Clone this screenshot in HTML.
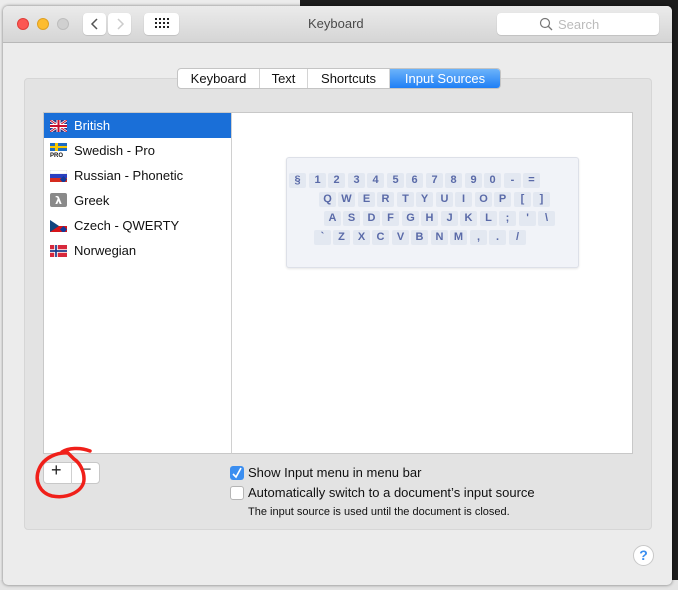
<!DOCTYPE html>
<html><head><style>
*{margin:0;padding:0;box-sizing:border-box}
body{width:678px;height:590px;overflow:hidden;background:#ececec;font-family:"Liberation Sans",sans-serif;position:relative}
.abs{position:absolute}
.win{left:3px;top:6px;width:669px;height:579px;background:#ececec;border-radius:5px;overflow:hidden;box-shadow:0 0 3px rgba(0,0,0,.5)}
.tb{left:0;top:0;width:669px;height:37px;background:linear-gradient(#ebebeb,#d5d5d5);border-bottom:1px solid #b8b8b8}
.dot{width:12px;height:12px;border-radius:50%;top:12px}
.btn{background:#fff;border-radius:4px;box-shadow:0 0.5px 1px rgba(0,0,0,.2)}
.tabs{left:174px;top:62px;height:21px;display:flex;border:1px solid #c4c4c4;border-radius:4px;background:#fff;font-size:13px;overflow:hidden}
.tabs div{padding:2px 0;text-align:center;border-right:1px solid #d4d4d4;color:#111}
.list{left:43px;top:112px;width:189px;height:342px;background:#fff;border:1px solid #c8c8c8}
.row{position:absolute;left:0;width:187px;height:25px;font-size:13px;line-height:25px;padding-left:30px;color:#111}
.flag{position:absolute;left:6px;top:7px;width:17px;height:12px}
.key{position:absolute;width:17px;height:15px;background:#e3e8f1;border-radius:2px;color:#5a6aa8;font-weight:bold;font-size:11px;text-align:center;line-height:15px}
</style></head><body>
<div class="abs" style="left:300px;top:0;width:378px;height:590px;background:#1c1c1c"></div>
<div class="abs" style="left:0;top:580px;width:678px;height:10px;background:#e4e4e4"></div>
<div class="abs win">
 <div class="abs tb">
  <div class="abs dot" style="left:14px;background:#fc5753;border:1px solid #df3e39"></div>
  <div class="abs dot" style="left:34px;background:#fdbc2e;border:1px solid #dea024"></div>
  <div class="abs dot" style="left:54px;background:#d0d0d0;border:1px solid #bdbdbd"></div>
  <div class="abs btn" style="left:80px;top:7px;width:23px;height:22px"></div>
  <div class="abs btn" style="left:105px;top:7px;width:23px;height:22px"></div>
  <svg class="abs" style="left:80px;top:7px" width="48" height="22"><path d="M14 6 L9 11 L14 16" stroke="#555" stroke-width="1.5" fill="none"/><path d="M35 6 L40 11 L35 16" stroke="#ccc" stroke-width="1.5" fill="none"/></svg>
  <div class="abs btn" style="left:141px;top:7px;width:35px;height:22px"></div>
  <svg class="abs" style="left:152px;top:12px" width="14" height="12"><g fill="#222"><rect x="0" y="0" width="2" height="2"/><rect x="4" y="0" width="2" height="2"/><rect x="8" y="0" width="2" height="2"/><rect x="12" y="0" width="2" height="2"/><rect x="0" y="4" width="2" height="2"/><rect x="4" y="4" width="2" height="2"/><rect x="8" y="4" width="2" height="2"/><rect x="12" y="4" width="2" height="2"/><rect x="0" y="8" width="2" height="2"/><rect x="4" y="8" width="2" height="2"/><rect x="8" y="8" width="2" height="2"/><rect x="12" y="8" width="2" height="2"/></g></svg>
  <div class="abs" style="left:305px;top:10px;font-size:13px;color:#4a4a4a">Keyboard</div>
  <div class="abs btn" style="left:494px;top:7px;width:162px;height:22px"></div>
  <svg class="abs" style="left:536px;top:11px" width="14" height="14"><circle cx="6" cy="6" r="4.5" stroke="#777" stroke-width="1.2" fill="none"/><path d="M9 9 L13 13" stroke="#777" stroke-width="1.3"/></svg>
  <div class="abs" style="left:555px;top:11px;font-size:13px;color:#bbb">Search</div>
 </div>
 <div class="abs" style="left:21px;top:72px;width:628px;height:452px;background:#e3e3e3;border:1px solid #d6d6d6;border-radius:4px"></div>
 <div class="abs tabs"><div style="width:82px">Keyboard</div><div style="width:48px">Text</div><div style="width:82px">Shortcuts</div><div style="width:110px;background:linear-gradient(#6cb3fa,#1f7ff5);color:#fff;border:none">Input Sources</div></div>
 <div class="abs list" style="left:40px;top:106px">
  <div class="row" style="top:0;background:#1a6fd8;color:#fff"><svg class="flag" viewBox="0 0 17 12"><rect width="17" height="12" fill="#2a3a8a"/><path d="M0 0L17 12M17 0L0 12" stroke="#fff" stroke-width="2.5"/><path d="M0 0L17 12M17 0L0 12" stroke="#c8102e" stroke-width="1"/><path d="M8.5 0V12M0 6H17" stroke="#fff" stroke-width="4"/><path d="M8.5 0V12M0 6H17" stroke="#c8102e" stroke-width="2"/></svg>British</div>
  <div class="row" style="top:25px"><svg class="flag" viewBox="0 0 17 14" style="height:14px;top:5px"><rect width="17" height="8" fill="#1f6cc0"/><rect x="5" width="3" height="8" fill="#f8c800"/><rect y="3" width="17" height="2" fill="#f8c800"/><text x="0" y="14" font-size="6" font-family="Liberation Sans" fill="#111" font-weight="bold">PRO</text></svg>Swedish - Pro</div>
  <div class="row" style="top:50px"><svg class="flag" viewBox="0 0 17 12"><rect width="17" height="4" fill="#fff" stroke="#ccc" stroke-width=".5"/><rect y="4" width="17" height="4" fill="#2a3fc0"/><rect y="8" width="17" height="4" fill="#d52b1e"/><rect x="11" y="7" width="5" height="5" fill="#123a9a" transform="rotate(45 13.5 9.5)"/></svg>Russian - Phonetic</div>
  <div class="row" style="top:75px"><svg class="flag" viewBox="0 0 17 14" style="height:14px;top:5px"><rect width="17" height="14" rx="2" fill="#8a8a8a"/><text x="5" y="11" font-size="11" fill="#fff" font-weight="bold" font-family="DejaVu Sans">λ</text></svg>Greek</div>
  <div class="row" style="top:100px"><svg class="flag" viewBox="0 0 17 12"><rect width="17" height="6" fill="#fff"/><rect y="6" width="17" height="6" fill="#d7141a"/><path d="M0 0L9 6L0 12Z" fill="#11457e"/><rect x="11" y="7" width="5" height="5" fill="#123a9a" transform="rotate(45 13.5 9.5)"/></svg>Czech - QWERTY</div>
  <div class="row" style="top:125px"><svg class="flag" viewBox="0 0 17 12"><rect width="17" height="12" fill="#d8283c"/><path d="M6 0V12M0 6H17" stroke="#fff" stroke-width="3.5"/><path d="M6 0V12M0 6H17" stroke="#1a3a8a" stroke-width="1.7"/></svg>Norwegian</div>
 </div>
 <div class="abs" style="left:228px;top:106px;width:402px;height:342px;background:#fff;border:1px solid #c8c8c8;border-left:1px solid #d0d0d0"></div>
 <div class="abs" style="left:283px;top:151px;width:293px;height:111px;background:#f1f3f8;border:1px solid #dde0e8;border-radius:3px;box-shadow:0 1px 2px rgba(0,0,0,.1)"></div>
 <div class="abs" style="left:40px;top:456px;width:57px;height:22px;background:#fff;border:1px solid #c8c8c8;border-radius:4px"></div>
 <div class="abs" style="left:68px;top:456px;width:1px;height:22px;background:#d0d0d0"></div>
 <div class="abs" style="left:48px;top:454px;font-size:18px;color:#222">+</div>
 <div class="abs" style="left:78px;top:453px;font-size:18px;color:#555">−</div>
 <svg class="abs" style="left:25px;top:437px" width="70" height="60"><path d="M34 9 C40 5 52 4 62 8 M40 10 C30 9 16 14 11 26 C6 38 12 50 24 53 C40 56 56 48 56 36 C56 28 52 20 46 16 L40 10" stroke="#f0201a" stroke-width="3.5" fill="none" stroke-linecap="round"/></svg>
 <div class="abs" style="left:227px;top:460px;width:14px;height:14px;border-radius:3px;background:#3b8ef0"></div>
 <svg class="abs" style="left:229px;top:461px" width="10" height="12"><path d="M1 7 L4 10 L9 1" stroke="#fff" stroke-width="1.6" fill="none"/></svg>
 <div class="abs" style="left:245px;top:459px;font-size:13px;color:#111">Show Input menu in menu bar</div>
 <div class="abs" style="left:227px;top:480px;width:14px;height:14px;border-radius:3px;background:#fff;border:1px solid #b5b5b5"></div>
 <div class="abs" style="left:245px;top:479px;font-size:13px;color:#111">Automatically switch to a document’s input source</div>
 <div class="abs" style="left:245px;top:500px;font-size:11px;color:#111">The input source is used until the document is closed.</div>
 <div class="abs" style="left:630px;top:539px;width:21px;height:21px;border-radius:50%;background:#fff;border:1px solid #c8c8c8;color:#3a8ef0;font-size:14px;text-align:center;line-height:19px;font-weight:bold">?</div>
</div>
<div style="position:absolute;left:3px;top:6px">
<div class="key" style="left:286px;top:167px">§</div><div class="key" style="left:306px;top:167px">1</div><div class="key" style="left:325px;top:167px">2</div><div class="key" style="left:345px;top:167px">3</div><div class="key" style="left:364px;top:167px">4</div><div class="key" style="left:384px;top:167px">5</div><div class="key" style="left:403px;top:167px">6</div><div class="key" style="left:423px;top:167px">7</div><div class="key" style="left:442px;top:167px">8</div><div class="key" style="left:462px;top:167px">9</div><div class="key" style="left:481px;top:167px">0</div><div class="key" style="left:501px;top:167px">-</div><div class="key" style="left:520px;top:167px">=</div>
<div class="key" style="left:316px;top:186px">Q</div><div class="key" style="left:335px;top:186px">W</div><div class="key" style="left:355px;top:186px">E</div><div class="key" style="left:374px;top:186px">R</div><div class="key" style="left:394px;top:186px">T</div><div class="key" style="left:413px;top:186px">Y</div><div class="key" style="left:433px;top:186px">U</div><div class="key" style="left:452px;top:186px">I</div><div class="key" style="left:472px;top:186px">O</div><div class="key" style="left:491px;top:186px">P</div><div class="key" style="left:511px;top:186px">[</div><div class="key" style="left:530px;top:186px">]</div>
<div class="key" style="left:321px;top:205px">A</div><div class="key" style="left:340px;top:205px">S</div><div class="key" style="left:360px;top:205px">D</div><div class="key" style="left:379px;top:205px">F</div><div class="key" style="left:399px;top:205px">G</div><div class="key" style="left:418px;top:205px">H</div><div class="key" style="left:438px;top:205px">J</div><div class="key" style="left:457px;top:205px">K</div><div class="key" style="left:477px;top:205px">L</div><div class="key" style="left:496px;top:205px">;</div><div class="key" style="left:516px;top:205px">'</div><div class="key" style="left:535px;top:205px">\</div>
<div class="key" style="left:311px;top:224px">`</div><div class="key" style="left:330px;top:224px">Z</div><div class="key" style="left:350px;top:224px">X</div><div class="key" style="left:369px;top:224px">C</div><div class="key" style="left:389px;top:224px">V</div><div class="key" style="left:408px;top:224px">B</div><div class="key" style="left:428px;top:224px">N</div><div class="key" style="left:447px;top:224px">M</div><div class="key" style="left:467px;top:224px">,</div><div class="key" style="left:486px;top:224px">.</div><div class="key" style="left:506px;top:224px">/</div>
</div>
</body></html>
